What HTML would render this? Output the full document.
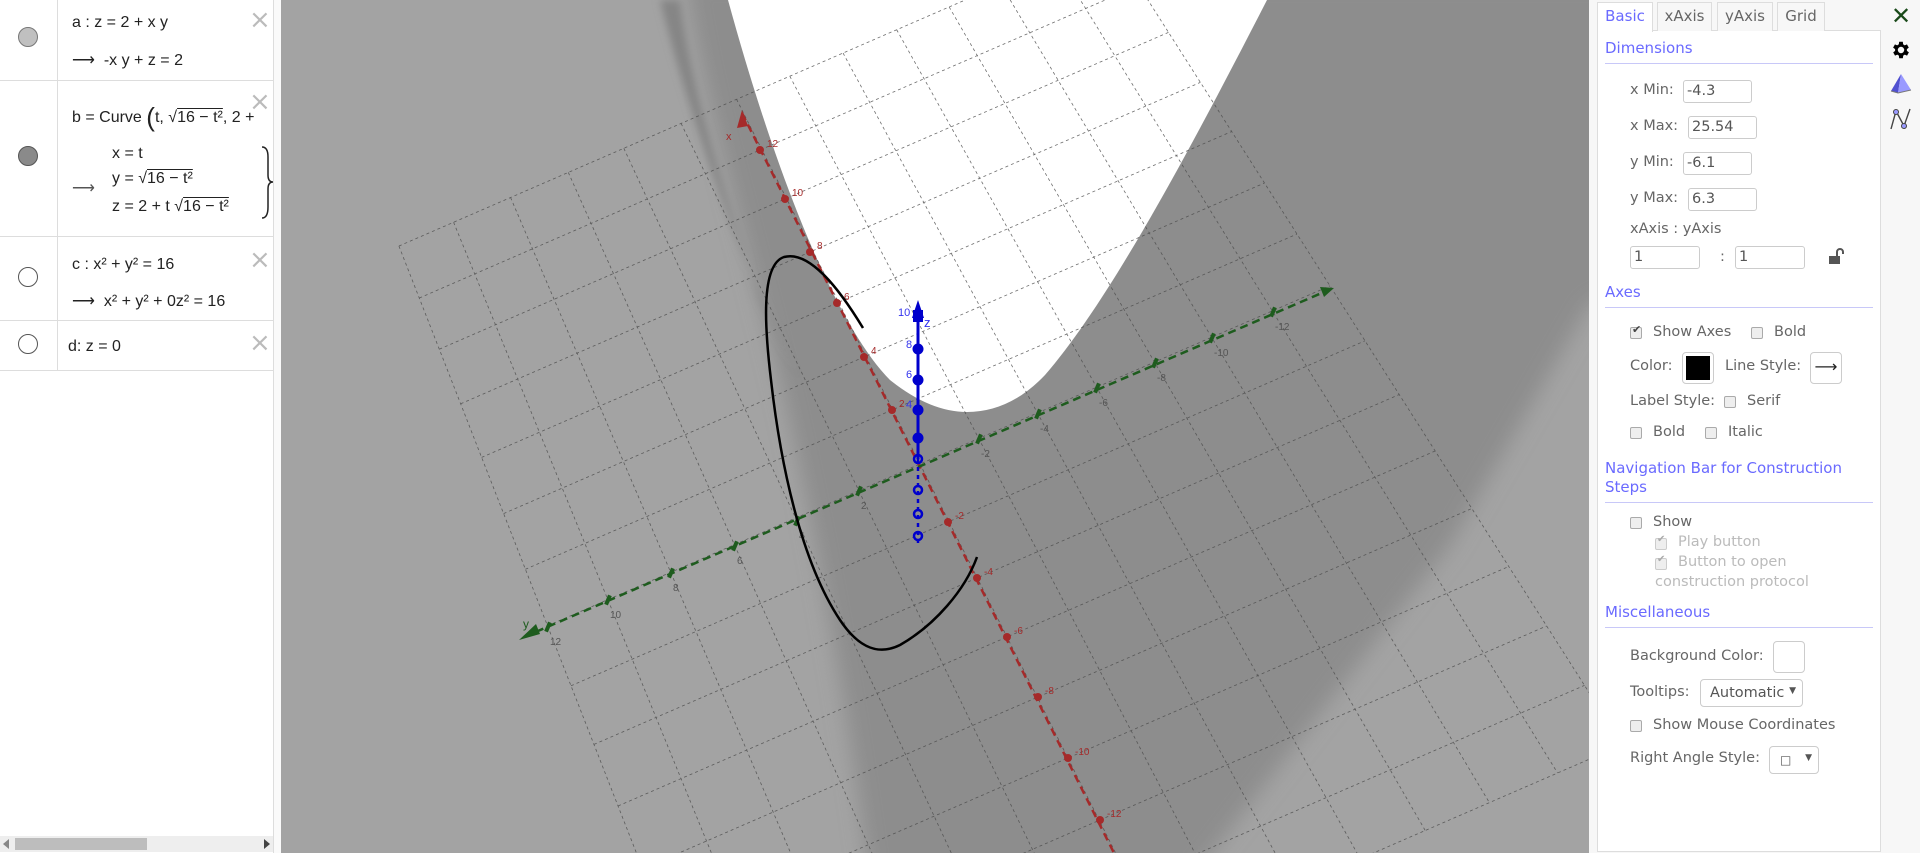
<!DOCTYPE html>
<html><head><meta charset="utf-8">
<style>
*{margin:0;padding:0;box-sizing:border-box}
html,body{width:1920px;height:853px;overflow:hidden}
body{background:#fff;position:relative;font-family:"DejaVu Sans","Liberation Sans",sans-serif;color:#666}
.abs{position:absolute}
#left{left:0;top:0;width:274px;height:853px;border-right:1px solid #ddd;background:#fff;overflow:hidden}
.row{position:absolute;left:0;width:273px;border-bottom:1px solid #ddd}
.vl{position:absolute;left:57px;top:0;width:1px;height:370px;background:#ddd}
.dot{position:absolute;left:18px;width:20px;height:20px;border-radius:50%;border:1px solid #555}
.xx{position:absolute;left:249px;font-size:26px;color:#bbb;font-family:"DejaVu Sans",sans-serif;line-height:20px}
.m{position:absolute;font-family:"Liberation Sans",sans-serif;font-size:16px;color:#222;white-space:nowrap}
#panel{left:1597px;top:30px;width:284px;height:822px;border:1px solid #ddd;background:#fff}
.tab{position:absolute;top:2px;height:29px;border:1px solid #ddd;border-bottom:none;background:#f7f7f7;font-size:15px;color:#666;text-align:center;line-height:26px}
.h{position:absolute;left:1605px;font-size:15px;color:#6a6aff;white-space:nowrap}
.hl{position:absolute;left:1605px;width:268px;height:1px;background:#c8c8f8}
.t{position:absolute;font-size:14.5px;color:#666;white-space:nowrap}
.tg{position:absolute;font-size:14.5px;color:#bbb;white-space:nowrap}
.inp{position:absolute;height:23px;border:1px solid #ccc;border-radius:3px;font-size:14.5px;color:#555;padding-left:3px;line-height:21px}
.cb{position:absolute;width:12px;height:12px;border:1px solid #aaa;border-radius:2px;background:#eee}
</style></head><body>

<div id="left" class="abs">
 <div class="vl"></div>
 <div class="row" style="top:0;height:81px"></div>
 <div class="row" style="top:81px;height:156px"></div>
 <div class="row" style="top:237px;height:84px"></div>
 <div class="row" style="top:321px;height:50px"></div>
 <div class="dot" style="top:27px;background:#c0c0c0;border-color:#777"></div>
 <div class="dot" style="top:146px;background:#8a8a8a;border-color:#555"></div>
 <div class="dot" style="top:267px;background:#fff"></div>
 <div class="dot" style="top:334px;background:#fff"></div>
 <div class="xx" style="top:10px">×</div>
 <div class="xx" style="top:92px">×</div>
 <div class="xx" style="top:250px">×</div>
 <div class="xx" style="top:333px">×</div>
 <div class="m" style="left:72px;top:14px">a : z = 2 + x y</div>
 <div class="m" style="left:72px;top:50px">⟶&nbsp; -x y + z = 2</div>
 <div class="m" style="left:72px;top:102px">b = Curve <span style="font-size:26px;vertical-align:-4px">(</span>t, √<span style="text-decoration:overline">16 − t²</span>, 2 +</div>
 <div class="m" style="left:72px;top:178px;color:#555">⟶</div>
 <div class="m" style="left:112px;top:145px">x = t</div>
 <div class="m" style="left:112px;top:170px">y = √<span style="text-decoration:overline">16 − t²</span></div>
 <div class="m" style="left:112px;top:198px">z = 2 + t √<span style="text-decoration:overline">16 − t²</span></div>
 <svg class="abs" style="left:260px;top:145px" width="14" height="75"><path d="M2,2 Q8,2 8,12 L8,30 Q8,37 13,37 Q8,37 8,44 L8,62 Q8,73 2,73" stroke="#222" stroke-width="1.5" fill="none"/></svg>
 <div class="m" style="left:72px;top:256px">c : x² + y² = 16</div>
 <div class="m" style="left:72px;top:291px">⟶&nbsp; x² + y² + 0z² = 16</div>
 <div class="m" style="left:68px;top:338px">d: z = 0</div>
 <div class="abs" style="left:0;top:836px;width:273px;height:16px;background:#eee"></div>
 <div class="abs" style="left:15px;top:838px;width:132px;height:12px;background:#bdbdbd"></div>
 <div class="abs" style="left:3px;top:839px;border-right:6px solid #888;border-top:5px solid transparent;border-bottom:5px solid transparent"></div>
 <div class="abs" style="left:264px;top:839px;border-left:6px solid #444;border-top:5px solid transparent;border-bottom:5px solid transparent"></div>
</div>
<div class="abs" style="left:274px;top:0;width:7px;height:853px;background:#fafafa"></div>

<svg class="abs" style="left:0;top:0" width="1920" height="853" id="g">
 <defs>
  <clipPath id="cv"><rect x="281" y="0" width="1308" height="853"/></clipPath>
  <filter id="bl"><feGaussianBlur stdDeviation="10"/></filter>
  <filter id="bl2"><feGaussianBlur stdDeviation="4"/></filter>
 </defs>
 <g clip-path="url(#cv)" id="view">
  <rect x="281" y="0" width="1308" height="853" fill="#a3a3a3"/>
  <path filter="url(#bl)" d="M686,-20 L1620,-20 L1620,290 L1589,305 L1450,545 L1191,880 L870,880 C840,650 800,450 760,300 C730,180 700,80 686,-20 Z" fill="#8d8d8d"/>
  <path filter="url(#bl2)" d="M660,0 C690,120 740,260 800,380 L760,300 C720,180 690,80 680,0Z" fill="#858585"/>
  <path d="M728,0 C780,190 840,330 890,380 Q930,412 967,412 Q1010,412 1045,375 C1110,300 1190,150 1267,0 Z" fill="#fff"/>
  <g id="grid" stroke="#4a4a4a" stroke-width="0.8" stroke-dasharray="3,3" fill="none" opacity="0.8"></g>
  <line x1="742" y1="113" x2="1114" y2="853" stroke="#a52a2a" stroke-width="2.5" stroke-dasharray="8,5"/>
  <path d="M742,110 L737,128 L748,126Z" fill="#a52a2a"/>
  <text x="726" y="140" font-size="11" fill="#a52a2a" font-family="Liberation Sans">x</text>
  <line x1="524" y1="637" x2="1331" y2="289" stroke="#1e5c1e" stroke-width="2.5" stroke-dasharray="8,5"/>
  <path d="M519,640 L536,624 L540,634Z" fill="#1e5c1e"/>
  <path d="M1334,288 L1320,287 L1324,297Z" fill="#1e5c1e"/>
  <text x="523" y="628" font-size="12" fill="#1e5c1e" font-family="Liberation Sans">y</text>
  <g id="ticks"></g>
  <path d="M863,328 C840,290 810,250 784,257 C760,265 765,330 771,380 C780,460 800,560 840,620 C860,650 880,655 900,645 C935,625 965,590 977,557" stroke="#000" stroke-width="2.5" fill="none"/>
  <line x1="918" y1="308" x2="918" y2="459" stroke="#0000cc" stroke-width="3"/>
  <line x1="918" y1="459" x2="918" y2="546" stroke="#0000cc" stroke-width="2.5" stroke-dasharray="4,4"/>
  <path d="M918,300 L912,318 L924,318Z" fill="#0000cc"/>
  <rect x="913" y="310" width="10" height="12" fill="#0000cc"/>
  <g fill="#0000cc"><circle cx="918" cy="349" r="5.5"/><circle cx="918" cy="380" r="5.5"/><circle cx="918" cy="410" r="5.5"/><circle cx="918" cy="438" r="5.5"/></g>
  <g fill="none" stroke="#0000cc" stroke-width="2.5"><circle cx="918" cy="459" r="4"/><circle cx="918" cy="490" r="4"/><circle cx="918" cy="514" r="4"/><circle cx="918" cy="536" r="4"/></g>
  <g font-family="Liberation Sans" font-size="11" fill="#3333ee"><text x="898" y="316">10</text><text x="924" y="327" font-size="13">z</text><text x="906" y="348">8</text><text x="906" y="378">6</text><text x="906" y="408">4</text></g>
 </g>
</svg>

<div class="abs" style="left:1589px;top:0;width:331px;height:853px;background:#f7f7f7"></div>
<div id="panel" class="abs"></div>
<div class="tab" style="left:1597px;width:56px;background:#fff;color:#6a6aff;height:30px">Basic</div>
<div class="tab" style="left:1657px;width:55px">xAxis</div>
<div class="tab" style="left:1717px;width:56px">yAxis</div>
<div class="tab" style="left:1777px;width:48px">Grid</div>

<div class="h" style="top:39px">Dimensions</div><div class="hl" style="top:63px"></div>
<div class="t" style="left:1630px;top:82px">x Min:</div><div class="inp" style="left:1683px;top:80px;width:69px">-4.3</div>
<div class="t" style="left:1630px;top:118px">x Max:</div><div class="inp" style="left:1688px;top:116px;width:69px">25.54</div>
<div class="t" style="left:1630px;top:154px">y Min:</div><div class="inp" style="left:1683px;top:152px;width:69px">-6.1</div>
<div class="t" style="left:1630px;top:190px">y Max:</div><div class="inp" style="left:1688px;top:188px;width:69px">6.3</div>
<div class="t" style="left:1630px;top:221px">xAxis : yAxis</div>
<div class="inp" style="left:1630px;top:246px;width:70px">1</div><div class="t" style="left:1720px;top:249px">:</div><div class="inp" style="left:1735px;top:246px;width:70px">1</div>
<svg class="abs" style="left:1828px;top:248px" width="18" height="18"><path d="M9,8 V4 a3,3 0 0 1 6,0 V6" stroke="#555" stroke-width="2" fill="none"/><rect x="1" y="8" width="11" height="8" fill="#555"/></svg>

<div class="h" style="top:283px">Axes</div><div class="hl" style="top:307px"></div>
<div class="cb" style="left:1630px;top:327px"></div><div class="abs" style="left:1632px;top:323px;font-size:11px;color:#444">✔</div><div class="t" style="left:1653px;top:324px">Show Axes</div>
<div class="cb" style="left:1751px;top:327px"></div><div class="t" style="left:1774px;top:324px">Bold</div>
<div class="t" style="left:1630px;top:358px">Color:</div>
<div class="abs" style="left:1682px;top:352px;width:32px;height:32px;border:1px solid #ccc;border-radius:4px"></div><div class="abs" style="left:1686px;top:356px;width:24px;height:24px;background:#000"></div>
<div class="t" style="left:1725px;top:358px">Line Style:</div>
<div class="abs" style="left:1810px;top:352px;width:32px;height:32px;border:1px solid #ccc;border-radius:4px;font-size:16px;text-align:center;line-height:28px;color:#222">⟶</div>
<div class="t" style="left:1630px;top:393px">Label Style:</div><div class="cb" style="left:1724px;top:396px"></div><div class="t" style="left:1747px;top:393px">Serif</div>
<div class="cb" style="left:1630px;top:427px"></div><div class="t" style="left:1653px;top:424px">Bold</div>
<div class="cb" style="left:1705px;top:427px"></div><div class="t" style="left:1728px;top:424px">Italic</div>

<div class="h" style="top:459px">Navigation Bar for Construction</div>
<div class="h" style="top:478px">Steps</div><div class="hl" style="top:502px"></div>
<div class="cb" style="left:1630px;top:517px"></div><div class="t" style="left:1653px;top:514px">Show</div>
<div class="cb" style="left:1655px;top:538px;border-color:#ccc"></div><div class="abs" style="left:1657px;top:534px;font-size:10px;color:#aaa">✔</div><div class="tg" style="left:1678px;top:534px">Play button</div>
<div class="cb" style="left:1655px;top:558px;border-color:#ccc"></div><div class="abs" style="left:1657px;top:554px;font-size:10px;color:#aaa">✔</div><div class="tg" style="left:1678px;top:554px">Button to open</div>
<div class="tg" style="left:1655px;top:574px">construction protocol</div>

<div class="h" style="top:603px">Miscellaneous</div><div class="hl" style="top:627px"></div>
<div class="t" style="left:1630px;top:648px">Background Color:</div>
<div class="abs" style="left:1773px;top:641px;width:32px;height:32px;border:1px solid #ccc;border-radius:4px"></div>
<div class="t" style="left:1630px;top:684px">Tooltips:</div>
<div class="abs" style="left:1700px;top:679px;width:103px;height:28px;border:1px solid #ccc;border-radius:4px;font-size:14.5px;color:#555;line-height:26px;padding-left:9px">Automatic <span style="font-size:9px;position:absolute;right:6px;top:-2px">▼</span></div>
<div class="cb" style="left:1630px;top:720px"></div><div class="t" style="left:1653px;top:717px">Show Mouse Coordinates</div>
<div class="t" style="left:1630px;top:750px">Right Angle Style:</div>
<div class="abs" style="left:1769px;top:746px;width:50px;height:28px;border:1px solid #ccc;border-radius:4px;font-size:12px;color:#555;line-height:26px;padding-left:10px">□<span style="font-size:9px;position:absolute;right:6px;top:-2px">▼</span></div>

<div class="abs" style="left:1891px;top:2px;font-size:24px;color:#1a4a1a;font-family:'DejaVu Sans'">✕</div>
<svg class="abs" style="left:1890px;top:39px" width="22" height="22" viewBox="0 0 24 24"><path fill="#000" d="M19.4 13a7.5 7.5 0 0 0 0-2l2.1-1.6-2-3.5-2.5 1a7 7 0 0 0-1.7-1L15 3h-4l-.4 2.9a7 7 0 0 0-1.7 1l-2.5-1-2 3.5L6.6 11a7.5 7.5 0 0 0 0 2l-2.1 1.6 2 3.5 2.5-1a7 7 0 0 0 1.7 1L11 21h4l.4-2.9a7 7 0 0 0 1.7-1l2.5 1 2-3.5zM13 15.5a3.5 3.5 0 1 1 0-7 3.5 3.5 0 0 1 0 7z" transform="translate(-1 0)"/></svg>
<svg class="abs" style="left:1889px;top:73px" width="24" height="22"><path d="M12,1 L2,18 L9,20Z" fill="#5050d0"/><path d="M12,1 L9,20 L22,17Z" fill="#9a9aff"/><path d="M2,18 L9,20 L22,17" stroke="#777" fill="none"/></svg>
<svg class="abs" style="left:1889px;top:107px" width="24" height="24"><path d="M2,22 L7,4 L15,19 L21,2" stroke="#444" stroke-width="1.4" fill="none"/><circle cx="7" cy="5" r="2.5" fill="#9a9aff" stroke="#444"/><circle cx="15" cy="19" r="2.5" fill="#9a9aff" stroke="#444"/></svg>

<script>
(function(){
 var R={16:[710,48],14:[735,100],12:[760,150],10:[785,199],8:[810,252],6:[837,303],4:[864,357],2:[892,410],0:[920,464],
  '-2':[948,522],'-4':[977,578],'-6':[1007,637],'-8':[1038,697],'-10':[1068,758],'-12':[1100,820],'-14':[1132,882],'-16':[1164,944]};
 var G={12:[548,627],10:[608,600],8:[671,573],6:[735,546],4:[797,521],2:[859,491],0:[920,464],'-2':[979,439],'-4':[1038,414],
  '-6':[1097,388],'-8':[1155,363],'-10':[1212,338],'-12':[1273,312],'-14':[1332,289]};
 var V=[-1044,-3441],D=[725,-315];
 function inter(p1,d1,p2,d2){var den=d1[0]*d2[1]-d1[1]*d2[0];var t=((p2[0]-p1[0])*d2[1]-(p2[1]-p1[1])*d2[0])/den;return [p1[0]+t*d1[0],p1[1]+t*d1[1]];}
 function sd(y){var g=G[y];return [g[0]-V[0],g[1]-V[1]];}
 var s='';
 var xs=[14,-16],ys=[12,-14];
 for(var y=-14;y<=12;y+=2){var a=inter(G[y],sd(y),R[14],D),b=inter(G[y],sd(y),R[-16],D);s+='<line x1="'+a[0]+'" y1="'+a[1]+'" x2="'+b[0]+'" y2="'+b[1]+'"/>';}
 for(var x=-16;x<=14;x+=2){var a=inter(R[x],D,G[12],sd(12)),b=inter(R[x],D,G[-14],sd(-14));s+='<line x1="'+a[0]+'" y1="'+a[1]+'" x2="'+b[0]+'" y2="'+b[1]+'"/>';}
 document.getElementById('grid').innerHTML=s;
 var t='';
 for(var x=-12;x<=12;x+=2){if(!x)continue;var q=R[x];t+='<circle cx="'+q[0]+'" cy="'+q[1]+'" r="4" fill="#a52a2a"/><text x="'+(q[0]+7)+'" y="'+(q[1]-3)+'" font-size="10" fill="#a52a2a" font-family="Liberation Sans">'+x+'</text>';}
 for(var y=-12;y<=12;y+=2){if(!y)continue;var q=G[y];t+='<rect x="'+(q[0]-2)+'" y="'+(q[1]-5)+'" width="4" height="10" fill="#1e5c1e" transform="rotate(23 '+q[0]+' '+q[1]+')"/><text x="'+(q[0]+2)+'" y="'+(q[1]+18)+'" font-size="10" fill="#555" font-family="Liberation Sans">'+y+'</text>';}
 document.getElementById('ticks').innerHTML=t;
})();
</script>
</body></html>
